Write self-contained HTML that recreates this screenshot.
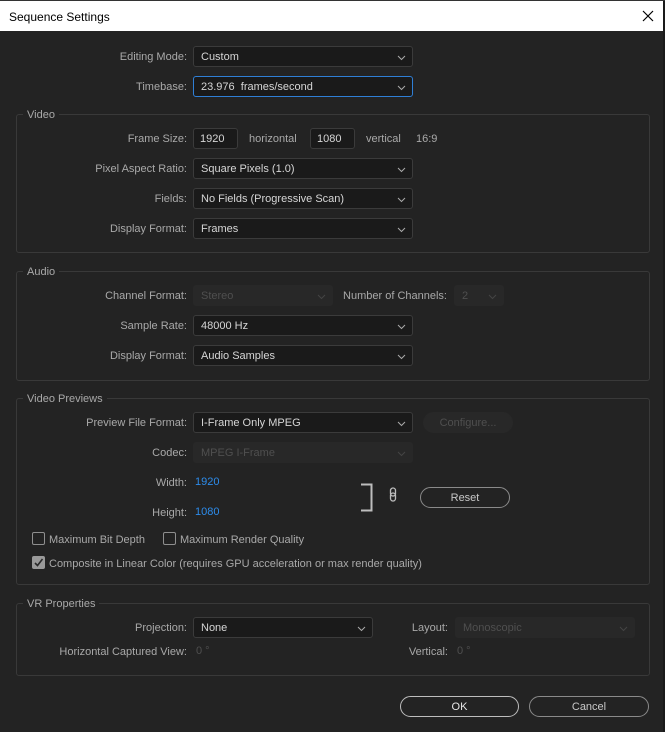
<!DOCTYPE html>
<html><head><meta charset="utf-8"><style>
*{box-sizing:border-box;margin:0;padding:0}
body{width:665px;height:732px;background:#232323;position:relative;overflow:hidden;font-family:"Liberation Sans",sans-serif;font-size:11px;color:#a9a9a9}
.a{position:absolute}
.t{position:absolute;white-space:nowrap;line-height:14px;transform:translateY(1px)}
.l{position:absolute;white-space:nowrap;line-height:14px;text-align:right;right:0;transform:translateY(1px)}
.dd{position:absolute;height:21px;background:#1a1a1a;border:1px solid #3b3b3b;border-radius:3px;color:#d6d6d6;padding-left:7px;line-height:20px;white-space:nowrap}
.dd.dis{background:#282828;border-color:#282828;color:#4f4f4f}
.dd svg{position:absolute;right:6px;top:8px}
.box{position:absolute;border:1px solid #393939;border-radius:3px}
.lg{position:absolute;top:-8px;left:6px;background:#232323;padding:0 4px;color:#a9a9a9;line-height:14px;transform:translateY(1px)}
.in{position:absolute;height:21px;background:#1a1a1a;border:1px solid #3b3b3b;border-radius:3px;color:#d6d6d6;padding-left:6px;line-height:20px}
.btn{position:absolute;height:21px;border:1px solid #8a8a8a;border-radius:11px;text-align:center;line-height:20px;color:#c8c8c8}
.cb{position:absolute;width:13px;height:13px;border:1px solid #8f8f8f;border-radius:2px}
</style></head><body>
<div class="a" style="left:0;top:0;width:665px;height:1px;background:#333"></div>
<div class="a" style="left:0;top:1px;width:663px;height:30px;background:#fff"></div>
<div class="t" style="left:9px;top:9px;color:#000;font-size:12px">Sequence Settings</div>
<svg class="a" style="left:642px;top:10px" width="12" height="12"><path d="M1 1L11 11M11 1L1 11" stroke="#000" stroke-width="1.2"/></svg>
<div class="a" style="left:663px;top:1px;width:2px;height:731px;background:#1a1a1a"></div>

<div class="a" style="left:0;top:49px;width:187px"><div class="l">Editing Mode:</div></div>
<div class="dd" style="left:193px;top:46px;width:220px">Custom<svg width="9" height="6"><path d="M1 1L4.5 4.5L8 1" stroke="#aaa" fill="none"/></svg></div>
<div class="a" style="left:0;top:79px;width:187px"><div class="l">Timebase:</div></div>
<div class="dd" style="left:193px;top:76px;width:220px;border-color:#2f7fd6">23.976&nbsp; frames/second<svg width="9" height="6"><path d="M1 1L4.5 4.5L8 1" stroke="#aaa" fill="none"/></svg></div>

<div class="box" style="left:16px;top:114px;width:634px;height:139px"><div class="lg">Video</div></div>
<div class="a" style="left:0;top:131px;width:187px"><div class="l">Frame Size:</div></div>
<div class="in" style="left:193px;top:128px;width:45px">1920</div>
<div class="t" style="left:249px;top:131px">horizontal</div>
<div class="in" style="left:310px;top:128px;width:45px">1080</div>
<div class="t" style="left:366px;top:131px">vertical</div>
<div class="t" style="left:416px;top:131px">16:9</div>
<div class="a" style="left:0;top:161px;width:187px"><div class="l">Pixel Aspect Ratio:</div></div>
<div class="dd" style="left:193px;top:158px;width:220px">Square Pixels (1.0)<svg width="9" height="6"><path d="M1 1L4.5 4.5L8 1" stroke="#aaa" fill="none"/></svg></div>
<div class="a" style="left:0;top:191px;width:187px"><div class="l">Fields:</div></div>
<div class="dd" style="left:193px;top:188px;width:220px">No Fields (Progressive Scan)<svg width="9" height="6"><path d="M1 1L4.5 4.5L8 1" stroke="#aaa" fill="none"/></svg></div>
<div class="a" style="left:0;top:221px;width:187px"><div class="l">Display Format:</div></div>
<div class="dd" style="left:193px;top:218px;width:220px">Frames<svg width="9" height="6"><path d="M1 1L4.5 4.5L8 1" stroke="#aaa" fill="none"/></svg></div>

<div class="box" style="left:16px;top:271px;width:634px;height:110px"><div class="lg">Audio</div></div>
<div class="a" style="left:0;top:288px;width:187px"><div class="l">Channel Format:</div></div>
<div class="dd dis" style="left:193px;top:285px;width:140px">Stereo<svg width="9" height="6"><path d="M1 1L4.5 4.5L8 1" stroke="#444" fill="none"/></svg></div>
<div class="a" style="left:0;top:288px;width:447px"><div class="l">Number of Channels:</div></div>
<div class="dd dis" style="left:454px;top:285px;width:50px">2<svg width="9" height="6"><path d="M1 1L4.5 4.5L8 1" stroke="#444" fill="none"/></svg></div>
<div class="a" style="left:0;top:318px;width:187px"><div class="l">Sample Rate:</div></div>
<div class="dd" style="left:193px;top:315px;width:220px">48000 Hz<svg width="9" height="6"><path d="M1 1L4.5 4.5L8 1" stroke="#aaa" fill="none"/></svg></div>
<div class="a" style="left:0;top:348px;width:187px"><div class="l">Display Format:</div></div>
<div class="dd" style="left:193px;top:345px;width:220px">Audio Samples<svg width="9" height="6"><path d="M1 1L4.5 4.5L8 1" stroke="#aaa" fill="none"/></svg></div>

<div class="box" style="left:16px;top:398px;width:634px;height:187px"><div class="lg">Video Previews</div></div>
<div class="a" style="left:0;top:415px;width:187px"><div class="l">Preview File Format:</div></div>
<div class="dd" style="left:193px;top:412px;width:220px">I-Frame Only MPEG<svg width="9" height="6"><path d="M1 1L4.5 4.5L8 1" stroke="#aaa" fill="none"/></svg></div>
<div class="btn" style="left:423px;top:412px;width:90px;border-color:#282828;background:#282828;color:#4f4f4f">Configure...</div>
<div class="a" style="left:0;top:445px;width:187px"><div class="l">Codec:</div></div>
<div class="dd dis" style="left:193px;top:442px;width:220px">MPEG I-Frame<svg width="9" height="6"><path d="M1 1L4.5 4.5L8 1" stroke="#444" fill="none"/></svg></div>
<div class="a" style="left:0;top:475px;width:187px"><div class="l">Width:</div></div>
<div class="t" style="left:195px;top:474px;color:#2d8ceb">1920</div>
<div class="a" style="left:0;top:505px;width:187px"><div class="l">Height:</div></div>
<div class="t" style="left:195px;top:504px;color:#2d8ceb">1080</div>
<svg class="a" style="left:360px;top:483px" width="14" height="29"><path d="M1 1.5H11.5V27.5H1" stroke="#bdbdbd" stroke-width="2" fill="none"/></svg>
<svg class="a" style="left:389px;top:487px" width="9" height="16"><rect x="1.5" y="1" width="5" height="8" rx="2.5" stroke="#bdbdbd" fill="none" stroke-width="1.3"/><rect x="1.5" y="6" width="5" height="8" rx="2.5" stroke="#bdbdbd" fill="none" stroke-width="1.3"/></svg>
<div class="btn" style="left:420px;top:487px;width:90px">Reset</div>
<div class="cb" style="left:32px;top:532px"></div>
<div class="t" style="left:49px;top:532px">Maximum Bit Depth</div>
<div class="cb" style="left:163px;top:532px"></div>
<div class="t" style="left:180px;top:532px">Maximum Render Quality</div>
<div class="cb" style="left:32px;top:556px;background:#9a9a9a;border-color:#9a9a9a"><svg width="11" height="11" style="position:absolute;left:0;top:0"><path d="M2 6L4.5 8.5L9.5 2" stroke="#2a2a2a" stroke-width="1.6" fill="none"/></svg></div>
<div class="t" style="left:49px;top:556px">Composite in Linear Color (requires GPU acceleration or max render quality)</div>

<div class="box" style="left:16px;top:603px;width:634px;height:73px"><div class="lg">VR Properties</div></div>
<div class="a" style="left:0;top:620px;width:187px"><div class="l">Projection:</div></div>
<div class="dd" style="left:193px;top:617px;width:180px">None<svg width="9" height="6"><path d="M1 1L4.5 4.5L8 1" stroke="#aaa" fill="none"/></svg></div>
<div class="a" style="left:0;top:620px;width:448px"><div class="l">Layout:</div></div>
<div class="dd dis" style="left:455px;top:617px;width:180px">Monoscopic<svg width="9" height="6"><path d="M1 1L4.5 4.5L8 1" stroke="#444" fill="none"/></svg></div>
<div class="a" style="left:0;top:644px;width:187px"><div class="l">Horizontal Captured View:</div></div>
<div class="t" style="left:196px;top:643px;color:#4f4f4f">0 °</div>
<div class="a" style="left:0;top:644px;width:448px"><div class="l">Vertical:</div></div>
<div class="t" style="left:457px;top:643px;color:#4f4f4f">0 °</div>

<div class="btn" style="left:400px;top:696px;width:119px;border-color:#bdbdbd;color:#e6e6e6">OK</div>
<div class="btn" style="left:529px;top:696px;width:120px">Cancel</div>
</body></html>
